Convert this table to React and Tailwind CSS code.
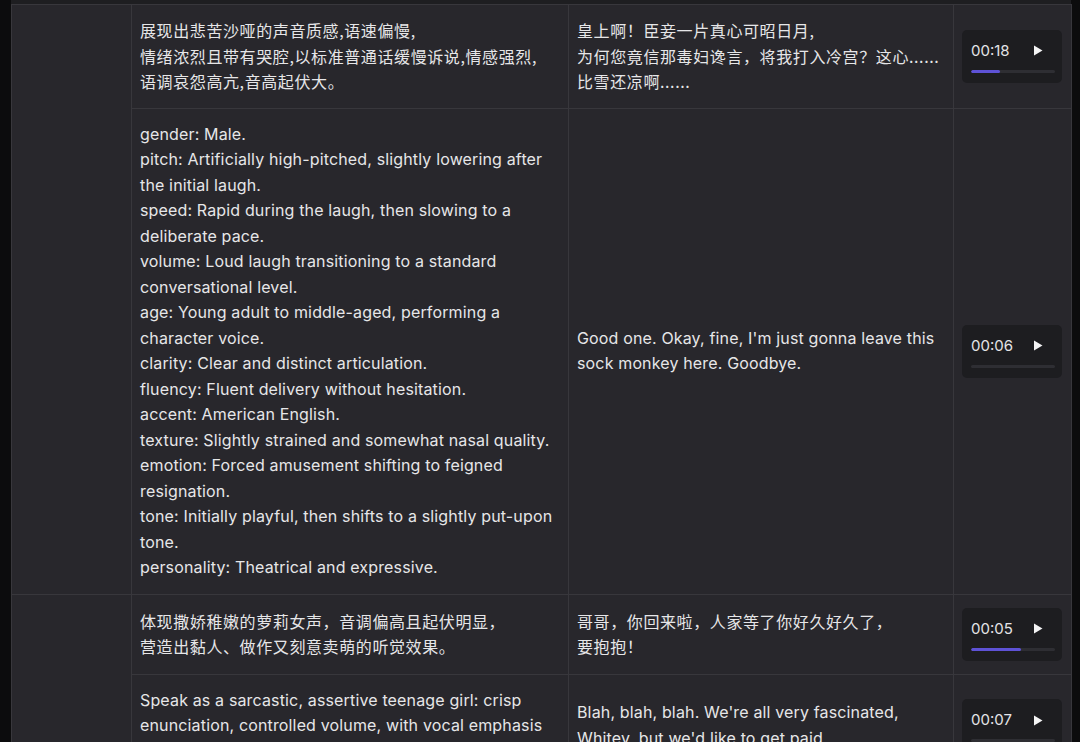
import React from "react";

const font = { fontFamily: "Inter, 'Noto Sans CJK SC', 'Noto Sans', sans-serif" };
const cjk = { fontFamily: "'Noto Sans CJK SC', Inter, sans-serif" };

function Lines({ lines, zh }) {
  return (
    <div style={zh ? cjk : undefined} className={zh ? "tracking-[0.6px]" : "tracking-[0.15px]"}>
      {lines.map((l, i) => (
        <div key={i} className="whitespace-nowrap">{l}</div>
      ))}
    </div>
  );
}

function Player({ time, progress }) {
  return (
    <div className="w-[100px] h-[53px] rounded-[5px] bg-[#1d1d20] px-[9px] pt-[11px] flex flex-col">
      <div className="flex items-center justify-between h-[20px]">
        <span className="text-[15px] leading-[20px] text-[#e4e4e7]">{time}</span>
        <svg width="10" height="11" viewBox="0 0 10 11" className="mr-[10px]">
          <path d="M1 0.5 L9.5 5.5 L1 10.5 Z" fill="#f4f4f5" />
        </svg>
      </div>
      <div className="mt-[9px] h-[3px] w-[84px] rounded-full bg-[#2e2e33] overflow-hidden">
        <div className="h-full bg-[#5e52d6] rounded-full" style={{ width: `${progress}%` }} />
      </div>
    </div>
  );
}

const rows = [
  {
    desc: [
      "展现出悲苦沙哑的声音质感,语速偏慢,",
      "情绪浓烈且带有哭腔,以标准普通话缓慢诉说,情感强烈,",
      "语调哀怨高亢,音高起伏大。",
    ],
    descZh: true,
    text: ["皇上啊！臣妾一片真心可昭日月,", "为何您竟信那毒妇谗言，将我打入冷宫？这心......", "比雪还凉啊......"],
    textZh: true,
    time: "00:18",
    progress: 35,
  },
  {
    desc: [
      "gender: Male.",
      "pitch: Artificially high-pitched, slightly lowering after",
      "the initial laugh.",
      "speed: Rapid during the laugh, then slowing to a",
      "deliberate pace.",
      "volume: Loud laugh transitioning to a standard",
      "conversational level.",
      "age: Young adult to middle-aged, performing a",
      "character voice.",
      "clarity: Clear and distinct articulation.",
      "fluency: Fluent delivery without hesitation.",
      "accent: American English.",
      "texture: Slightly strained and somewhat nasal quality.",
      "emotion: Forced amusement shifting to feigned",
      "resignation.",
      "tone: Initially playful, then shifts to a slightly put-upon",
      "tone.",
      "personality: Theatrical and expressive.",
    ],
    text: ["Good one. Okay, fine, I'm just gonna leave this", "sock monkey here. Goodbye."],
    time: "00:06",
    progress: 0,
  },
  {
    desc: ["体现撒娇稚嫩的萝莉女声，音调偏高且起伏明显，", "营造出黏人、做作又刻意卖萌的听觉效果。"],
    descZh: true,
    text: ["哥哥，你回来啦，人家等了你好久好久了，", "要抱抱！"],
    textZh: true,
    time: "00:05",
    progress: 60,
  },
  {
    desc: [
      "Speak as a sarcastic, assertive teenage girl: crisp",
      "enunciation, controlled volume, with vocal emphasis",
      "that conveys irritation and impatience.",
    ],
    text: ["Blah, blah, blah. We're all very fascinated,", "Whitey, but we'd like to get paid."],
    time: "00:07",
    progress: 0,
  },
];

export default function App() {
  const cell = "border border-[#38373c] bg-[#28272c] align-middle px-[8px] py-[13px]";
  return (
    <div className="w-[1080px] h-[742px] overflow-hidden bg-[#0c0c0d] pl-[11px]" style={font}>
      <div className="w-[1060px] bg-[#1e1e21] pt-[4px]">
        <table className="border-collapse w-[1060px] table-fixed text-[16px] leading-[25.5px] text-[#e6e6e8]">
          <colgroup>
            <col className="w-[120px]" />
            <col className="w-[437px]" />
            <col className="w-[385px]" />
            <col className="w-[118px]" />
          </colgroup>
          <tbody>
            {rows.map((r, i) => (
              <tr key={i}>
                {i % 2 === 0 && <td rowSpan={2} className={cell} />}
                <td className={cell}>
                  <Lines lines={r.desc} zh={r.descZh} />
                </td>
                <td className={cell}>
                  <Lines lines={r.text} zh={r.textZh} />
                </td>
                <td className={cell}>
                  <Player time={r.time} progress={r.progress} />
                </td>
              </tr>
            ))}
          </tbody>
        </table>
      </div>
    </div>
  );
}
